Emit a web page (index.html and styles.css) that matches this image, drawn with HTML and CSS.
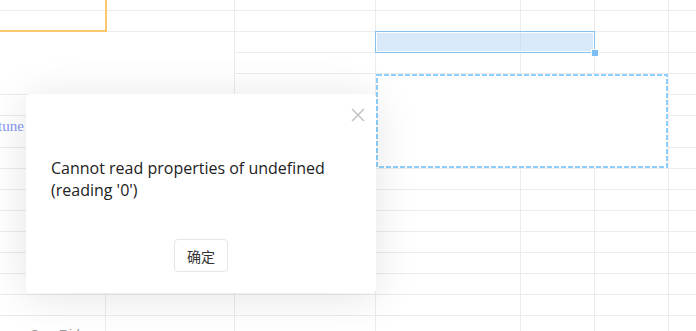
FILE: index.html
```html
<!DOCTYPE html>
<html>
<head>
<meta charset="utf-8">
<link rel="stylesheet" href="styles.css">
</head>
<body>
<div class="sheet">
  <div class="cell merged"></div>
  <div class="cell"></div><div class="cell"></div><div class="cell"></div><div class="cell"></div><div class="cell"></div><div class="cell"></div><div class="cell"></div>
  <div class="cell"></div><div class="cell"></div><div class="cell"></div><div class="cell"></div><div class="cell"></div><div class="cell"></div><div class="cell"></div>
  <div class="cell"></div><div class="cell"></div><div class="cell"></div><div class="cell"></div><div class="cell"></div>
  <div class="cell"></div><div class="cell"></div><div class="cell"></div><div class="cell"></div><div class="cell"></div>
  <div class="cell"></div><div class="cell"></div><div class="cell"></div><div class="cell"></div><div class="cell"></div>
  <div class="cell"></div><div class="cell"></div><div class="cell"></div><div class="cell"></div><div class="cell"></div><div class="cell"></div><div class="cell"></div>
  <div class="cell"><span class="link">tune</span></div><div class="cell"></div><div class="cell"></div><div class="cell"></div><div class="cell"></div><div class="cell"></div><div class="cell"></div>
  <div class="cell"></div><div class="cell"></div><div class="cell"></div><div class="cell"></div><div class="cell"></div><div class="cell"></div><div class="cell"></div>
  <div class="cell"></div><div class="cell"></div><div class="cell"></div><div class="cell"></div><div class="cell"></div><div class="cell"></div><div class="cell"></div>
  <div class="cell"></div><div class="cell"></div><div class="cell"></div><div class="cell"></div><div class="cell"></div><div class="cell"></div><div class="cell"></div>
  <div class="cell"></div><div class="cell"></div><div class="cell"></div><div class="cell"></div><div class="cell"></div><div class="cell"></div><div class="cell"></div>
  <div class="cell"></div><div class="cell"></div><div class="cell"></div><div class="cell"></div><div class="cell"></div><div class="cell"></div><div class="cell"></div>
  <div class="cell"></div><div class="cell"></div><div class="cell"></div><div class="cell"></div><div class="cell"></div><div class="cell"></div><div class="cell"></div>
  <div class="cell"></div><div class="cell"></div><div class="cell"></div><div class="cell"></div><div class="cell"></div><div class="cell"></div><div class="cell"></div>
  <div class="cell"></div><div class="cell"></div><div class="cell"></div><div class="cell"></div><div class="cell"></div><div class="cell"></div><div class="cell"></div>
  <div class="cell"><span class="gray">Sun Ride</span></div><div class="cell"></div><div class="cell"></div><div class="cell"></div><div class="cell"></div><div class="cell"></div><div class="cell"></div>

  <div class="orange-box"></div>
  <div class="selection"><span class="handle"></span></div>
  <div class="dashed">
    <svg class="dash-svg" width="292" height="94" viewBox="0 0 292 94">
      <rect x="1" y="1" width="290" height="92" fill="none" stroke="#8ed0fb" stroke-width="2" stroke-dasharray="5 2"/>
    </svg>
  </div>

  <div class="modal">
    <div class="modal-head">
      <svg class="close" width="14" height="14" viewBox="0 0 14 14">
        <path d="M1 1 L13 13 M13 1 L1 13" stroke="#c4c4c4" stroke-width="1.6" fill="none"/>
      </svg>
    </div>
    <div class="modal-body">Cannot read properties of undefined (reading '0')</div>
    <div class="modal-foot">
      <button class="btn">确定</button>
    </div>
  </div>
</div>
</body>
</html>
```
FILE: styles.css
```css
html, body {
  margin: 0;
  padding: 0;
  background: #fff;
  overflow: hidden;
}
body {
  width: 696px;
  height: 331px;
}
.sheet {
  position: relative;
  display: grid;
  grid-template-columns: 106px 129px 141px 145px 74px 74px 100px;
  grid-template-rows: 11px repeat(5, 21px) 32px repeat(9, 21px);
  width: 769px;
}
.cell {
  box-sizing: border-box;
  border-right: 1px solid #ececec;
  border-bottom: 1px solid #ececec;
  overflow: hidden;
  white-space: nowrap;
}
.merged {
  grid-column: 1 / 3;
  grid-row: 3 / 6;
}
.link {
  display: block;
  margin: 1px 0 0 -2px;
  font-family: "Liberation Serif", serif;
  font-size: 15px;
  line-height: 18px;
  color: #8597f4;
}
.gray {
  display: block;
  margin: 11px 0 0 30px;
  font-family: "Liberation Sans", sans-serif;
  font-size: 14px;
  color: #9a9a9a;
}
.orange-box {
  position: absolute;
  left: -10px;
  top: -10px;
  width: 117px;
  height: 42px;
  box-sizing: border-box;
  border-right: 2px solid #fec66f;
  border-bottom: 2px solid #fec66f;
}
.selection {
  position: absolute;
  left: 375px;
  top: 31px;
  width: 220px;
  height: 22px;
  box-sizing: border-box;
  border: 1px solid #85c1ef;
  box-shadow: inset 0 0 0 1px #fff;
  background: rgba(180, 212, 245, 0.5);
}
.handle {
  position: absolute;
  right: -5px;
  bottom: -5px;
  width: 6px;
  height: 6px;
  background: #7dbdf5;
  border: 1px solid #fff;
}
.dashed {
  position: absolute;
  left: 376px;
  top: 74px;
  width: 292px;
  height: 94px;
  background: #fff;
}
.dash-svg {
  display: block;
}
.modal {
  position: absolute;
  left: 26px;
  top: 94px;
  width: 350px;
  height: 199px;
  box-sizing: border-box;
  background: #fff;
  border-radius: 4px;
  box-shadow: 0 4px 44px rgba(0, 0, 0, 0.11);
  display: flex;
  flex-direction: column;
  font-family: "Open Sans", "Noto Sans", sans-serif;
}
.modal-head {
  display: flex;
  justify-content: flex-end;
  padding: 14px 11px 0 0;
}
.close {
  display: block;
}
.modal-body {
  box-sizing: border-box;
  padding: 35px 25px 0 25px;
  font-size: 16px;
  line-height: 22px;
  color: #222;
  height: 117px;
}
.modal-foot {
  display: flex;
  justify-content: center;
}
.btn {
  width: 54px;
  height: 33px;
  box-sizing: border-box;
  background: #fff;
  border: 1px solid #e6e6e6;
  border-radius: 4px;
  font-family: "Noto Sans CJK SC", sans-serif;
  font-size: 14px;
  color: #333;
  padding: 0;
}
```
